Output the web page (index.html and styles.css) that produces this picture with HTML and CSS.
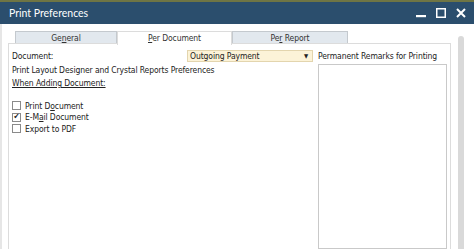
FILE: index.html
```html
<!DOCTYPE html>
<html>
<head>
    <title>Print Preferences</title>
    <meta charset="utf-8">
    <link rel="stylesheet" href="styles.css">
</head>
<body>
    <div class="window">
        <div class="titlebar">
            <span class="title">Print Preferences</span>
            <div class="controls">
                <svg width="10" height="10" viewBox="0 0 10 10"><rect x="0" y="7" width="10" height="2.2" fill="#fff"/></svg>
                <svg width="10" height="10" viewBox="0 0 10 10"><rect x="0.75" y="0.75" width="8.5" height="8.5" fill="none" stroke="#fff" stroke-width="1.5"/></svg>
                <svg width="10" height="10" viewBox="0 0 10 10"><path d="M1 1 L9 9 M9 1 L1 9" stroke="#fff" stroke-width="2"/></svg>
            </div>
        </div>
        <div class="client">
            <div class="main">
                <div class="tabs">
                    <div class="tab">Ge<u>n</u>eral</div>
                    <div class="tab active"><u>P</u>er Document</div>
                    <div class="tab">Pe<u>r</u> Report</div>
                </div>
                <div class="panel">
                    <div class="left">
                        <div class="row doc-row">
                            <span>Document:</span>
                            <div class="combo">Outgoing Payment<span class="arrow">&#9660;</span></div>
                        </div>
                        <div class="row">Print Layout Designer and Crystal Reports Preferences</div>
                        <div class="row heading"><u>When Adding Document:</u></div>
                        <div class="checks">
                            <label class="check"><span class="box"></span>Print D<u>o</u>cument</label>
                            <label class="check"><span class="box on">&#10004;</span>E-M<u>a</u>il Document</label>
                            <label class="check"><span class="box"></span>Export to PDF</label>
                        </div>
                    </div>
                    <div class="right">
                        <div class="remarks-label">Permanent Remarks for Printing</div>
                        <div class="remarks"></div>
                    </div>
                </div>
            </div>
            <div class="scroll"></div>
        </div>
    </div>
</body>
</html>
```

FILE: styles.css
```css
*{
    box-sizing: border-box;
}

body{
    margin: 0;
    width: 474px;
    height: 249px;
    overflow: hidden;
    background: #ffffff;
    font-family: 'DejaVu Sans Condensed', 'DejaVu Sans', sans-serif;
    font-size: 8.5px;
    letter-spacing: -0.1px;
    color: #222;
}

.window{
    display: flex;
    flex-direction: column;
    height: 249px;
    border-top: 2px solid #6f7544;
}

.titlebar{
    display: flex;
    align-items: center;
    justify-content: space-between;
    height: 22px;
    padding: 0 8px 0 9px;
    background: #2b4e6d;
    color: #fff;
}

.titlebar .title{
    font-family: Lato, sans-serif;
    font-size: 10.5px;
    letter-spacing: 0;
}

.controls{
    display: flex;
    gap: 10px;
    align-items: center;
}

.client{
    display: flex;
    flex: 1;
    border-left: 2px solid #e6e6e6;
    padding-left: 6px;
}

.main{
    display: flex;
    flex-direction: column;
    width: 443px;
    padding-top: 7px;
}

.tabs{
    display: flex;
    padding-left: 7px;
    height: 13px;
}

.tab{
    width: 102px;
    text-align: center;
    line-height: 12px;
    background: #e2e8ee;
    border: 1px solid #c4c9ce;
    border-bottom: none;
    color: #333;
}

.tab.active{
    width: 115px;
    background: #fff;
    border-color: #dcdcdc;
    height: 14px;
    z-index: 1;
}

.tab:last-child{
    width: 116px;
}

.panel{
    display: flex;
    flex: 1;
    border: 1px solid #dcdcdc;
    border-bottom: none;
    margin-top: -1px;
    padding: 6px 0 0 3px;
}

.left{
    width: 301px;
}

.row{
    height: 13px;
    line-height: 13px;
    white-space: nowrap;
}

.doc-row{
    display: flex;
    justify-content: space-between;
    margin-bottom: 1px;
}

.combo{
    width: 126px;
    height: 12px;
    line-height: 10px;
    padding-left: 2px;
    background: #fcf3d8;
    border: 1px solid #e3d5ae;
    position: relative;
}

.combo .arrow{
    position: absolute;
    right: 4px;
    top: 0;
    font-size: 6px;
}

.checks{
    display: flex;
    flex-direction: column;
    margin-top: 10px;
}

.check{
    display: flex;
    align-items: center;
    height: 11.5px;
}

.box{
    display: inline-flex;
    align-items: center;
    justify-content: center;
    width: 9px;
    height: 9px;
    border: 1px solid #8a8a8a;
    background: #fff;
    margin-right: 4px;
    font-size: 8px;
    line-height: 8px;
}

.right{
    display: flex;
    flex-direction: column;
    padding-left: 5px;
}

.remarks-label{
    height: 13px;
    line-height: 13px;
    margin-bottom: 1px;
    white-space: nowrap;
}

.remarks{
    width: 129px;
    flex: 1;
    border: 1px solid #c9c9c9;
    background: #fff;
}

.scroll{
    width: 6px;
    margin: 12px 0 0 7px;
    background: #d9d9d9;
    border-radius: 3px 3px 0 0;
}
```
